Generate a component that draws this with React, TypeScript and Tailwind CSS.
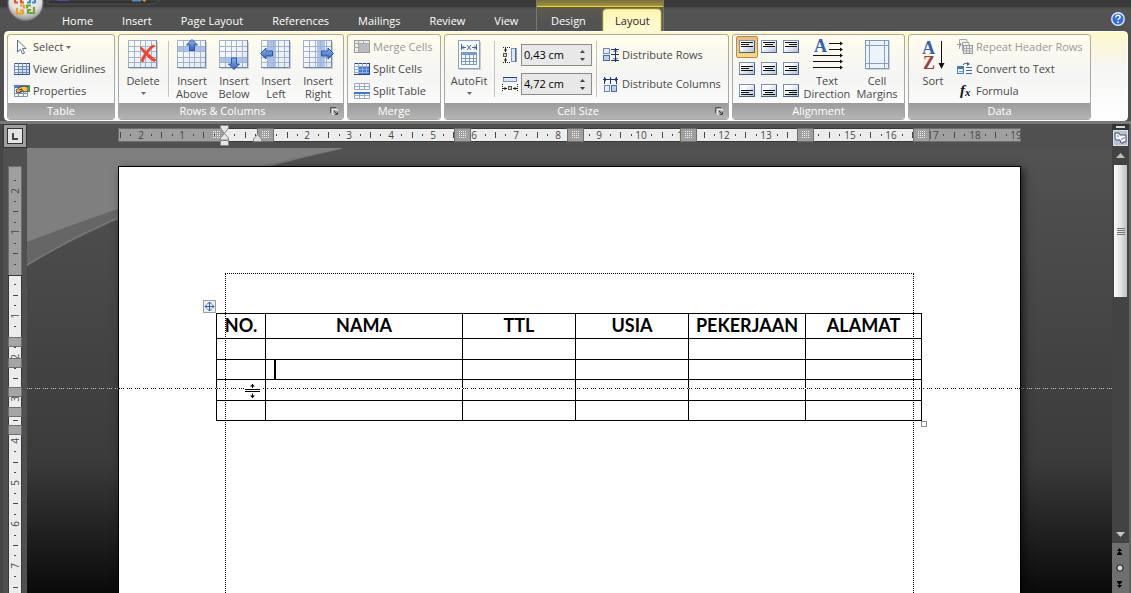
import React from 'react';

type Box = { children?: React.ReactNode; className?: string };

/* ---------- large icons ---------- */

function Grid32({ band, children }: { band?: React.ReactNode; children?: React.ReactNode }) {
  return (
    <svg width="32" height="32" viewBox="0 0 32 32" aria-hidden="true">
      <defs>
        <linearGradient id="cell" x1="0" y1="0" x2="1" y2="1">
          <stop offset="0" stopColor="#ffffff" />
          <stop offset="1" stopColor="#dfe8f2" />
        </linearGradient>
        <linearGradient id="arrow" x1="0" y1="0" x2="0" y2="1">
          <stop offset="0" stopColor="#8fb4f0" />
          <stop offset="1" stopColor="#2f63c0" />
        </linearGradient>
      </defs>
      <rect x="3" y="3" width="28" height="27" fill="#c9cdd3" />
      <rect x="2" y="2" width="28" height="27" fill="url(#cell)" />
      {band}
      <path d="M7.5 2V29M13.5 2V29M18.5 2V29M24.5 2V29M2 7.5H30M2 12.5H30M2 18.5H30M2 23.5H30" stroke="#a3b3c8" fill="none" />
      <path d="M1.500 28.500V1.500H30" stroke="#9db1cb" fill="none" />
      <path d="M1 28.500H29.500V1" stroke="#6f87a8" fill="none" />
      {children}
    </svg>
  );
}

const DeleteIcon = () => (
  <Grid32>
    <path d="M14 8c4 3 9 9 15 13l-2 1.500C21 19 16 13 13 9z" fill="#f2452d" stroke="#f2452d" strokeWidth="1" />
    <path d="M28 7C22 11 18 17 16 23l-2-1C16 16 20 10 26 6z" fill="#e93a22" stroke="#f2593f" strokeWidth="1" />
  </Grid32>
);
const AboveIcon = () => (
  <Grid32 band={<rect x="2" y="7" width="28" height="6" fill="#a8c2f2" />}>
    <path d="M16 .5l5.500 5.500H18.500V11.500h-5V6H10.500z" fill="url(#arrow)" stroke="#2a54a4" />
  </Grid32>
);
const BelowIcon = () => (
  <Grid32 band={<rect x="2" y="18" width="28" height="6" fill="#a8c2f2" />}>
    <path d="M16 30.500l-5.500-5.500h3v-6h5v6h3z" fill="url(#arrow)" stroke="#2a54a4" />
  </Grid32>
);
const LeftIcon = () => (
  <Grid32 band={<rect x="8" y="2" width="8" height="27" fill="#a8c2f2" />}>
    <path d="M.5 14.500l5.500-5.500v3h6.500v5H6v3z" fill="url(#arrow)" stroke="#2a54a4" />
  </Grid32>
);
const RightIcon = () => (
  <Grid32 band={<rect x="15" y="2" width="8" height="27" fill="#a8c2f2" />}>
    <path d="M31.500 14.500l-5.500-5.500v3h-6.500v5H26v3z" fill="url(#arrow)" stroke="#2a54a4" />
  </Grid32>
);
const AutoFitIcon = () => (
  <svg width="32" height="32" viewBox="0 0 32 32" aria-hidden="true">
    <rect x="6" y="3" width="22" height="28" fill="#c8ccd2" />
    <rect x="5.500" y="1.500" width="21" height="28" fill="#f7fafd" stroke="#8ba3c0" />
    <path d="M8.500 5V11M23.500 5V11M9 8.500h4M19 8.500h4M14 6l4 5M18 6l-4 5" stroke="#4a6796" fill="none" />
    <path d="M11 6.500l-2 2 2 2M21 6.500l2 2-2 2" stroke="#4a6796" fill="none" />
    <rect x="8" y="13" width="16" height="3" fill="#6f9ce0" />
    <path d="M8.500 13.500H23.500V25.500H8.500zM12.500 16V25M16.500 16V25M20.500 16V25M8 19.500H24M8 22.500H24" stroke="#7f97bb" fill="none" />
  </svg>
);
const TextDirectionIcon = () => (
  <svg width="32" height="32" viewBox="0 0 32 32" aria-hidden="true" className="overflow-visible">
    <text x="3" y="13" fontFamily="Liberation Serif, serif" fontWeight="700" fontSize="18" fill="#2f62b0">A</text>
    <path d="M18 4.500H31M18 10.500H31M2 16.500H31M2 22.500H31M2 28.500H31" stroke="#111" fill="none" />
    <path d="M29 2.500l3 2-3 2zM29 8.500l3 2-3 2zM29 14.500l3 2-3 2zM29 20.500l3 2-3 2zM29 26.500l3 2-3 2z" fill="#111" />
  </svg>
);
const CellMarginsIcon = () => (
  <svg width="32" height="32" viewBox="0 0 32 32" aria-hidden="true">
    <rect x="5" y="2" width="24" height="29" fill="#cfd3d8" />
    <rect x="4.500" y="1.500" width="23" height="28" fill="#edf3fb" stroke="#8199b8" />
    <path d="M8.500 2V29M23.500 2V29M5 6.500H27M5 24.500H27" stroke="#86a0c4" fill="none" />
  </svg>
);
const SortIcon = () => (
  <svg width="32" height="32" viewBox="0 0 32 32" aria-hidden="true" className="overflow-visible">
    <text x="5" y="15" fontFamily="Liberation Serif, serif" fontWeight="700" fontSize="18" fill="#3561ae">A</text>
    <text x="6" y="30" fontFamily="Liberation Serif, serif" fontWeight="700" fontSize="18" fill="#a23c3c">Z</text>
    <path d="M24.500 2V26" stroke="#111" fill="none" />
    <path d="M21.500 24h6l-3 6z" fill="#111" />
  </svg>
);

/* ---------- small icons ---------- */

const Svg16 = ({ children }: Box) => (
  <svg width="16" height="16" viewBox="0 0 16 16" aria-hidden="true" className="shrink-0 overflow-visible">{children}</svg>
);
const PointerIcon = () => (
  <Svg16>
    <path d="M3.500 1v12l3-2.800L8.500 15l2-1-2-4.500H12z" fill="#fff" stroke="#5c6f90" />
  </Svg16>
);
const SmallGrid = ({ fill, line, head }: { fill: string; line: string; head: string }) => (
  <Svg16>
    <rect x="0" y="2" width="16" height="12" fill="#f4f8fd" />
    <rect x="4" y="5" width="12" height="9" fill={fill} />
    <path d="M0 2.500H16" stroke={head} />
    <path d="M.5 2V14M4.500 2V14M8.500 2V14M12.500 2V14M0 5.500H16M0 8.500H16M0 11.500H16" stroke={line} fill="none" />
    <path d="M0 13.500H15.500V2" stroke={head} fill="none" />
  </Svg16>
);
const GridlinesIcon = () => <SmallGrid fill="#cfe0f8" line="#6f8fc0" head="#39578c" />;
const SplitCellsIcon = () => <SmallGrid fill="#4079dc" line="#8fafe0" head="#27457c" />;
const MergeIcon = () => (
  <Svg16>
    <rect x=".5" y="1.500" width="15" height="12" fill="#ececec" stroke="#9a9a9a" />
    <path d="M4.500 1V13M9.500 1V4M0 4.500H16M0 8.500H4" stroke="#a8a8a8" fill="none" />
    <rect x="5" y="5" width="10" height="8" fill="#b9bcc0" />
  </Svg16>
);
const SplitTableIcon = () => (
  <Svg16>
    <path d="M.5 .5H15.500V6.500H.5zM5.500 1V6M10.500 1V6M0 3.500H16" fill="#fff" stroke="#94a8c4" />
    <path d="M.5 9.500H15.500V15.500H.5zM5.500 9V15M10.500 9V15M0 12.500H16" fill="#fff" stroke="#94a8c4" />
    <path d="M0 10H16" stroke="#3b78dc" strokeWidth="2" />
  </Svg16>
);
const PropertiesIcon = () => (
  <Svg16>
    <path d="M.5 2.500H13.500V13.500H.5zM4.500 5V13M9.500 5V13M0 10.500H14" fill="#f4f8fd" stroke="#7d97c2" />
    <rect x="0" y="2" width="14" height="3" fill="#4b80d8" />
    <path d="M2 7l4-3 4-1 4 1v4l-3 1-2-1-3 2-1-1-2 1z" fill="#f3c04a" stroke="#3c3420" strokeWidth=".8" />
    <path d="M5 7l3-1M6 9l3-2" stroke="#3c3420" fill="none" />
    <rect x="14" y="2" width="2" height="7" fill="#3f9a55" />
  </Svg16>
);
const RowHeightIcon = () => (
  <Svg16>
    <path d="M1 .5H8M1 15.500H8" stroke="#222" strokeDasharray="1 1" fill="none" />
    <path d="M3.500 1v4M3.500 11v4M2 3h3M2 13h3" stroke="#222" fill="none" />
    <rect x="1.500" y="6.500" width="3" height="3" fill="#ddd" stroke="#555" />
    <rect x="9.500" y="1.500" width="4" height="13" fill="#dce8f8" stroke="#7b92b4" />
    <path d="M14 1V15" stroke="#27457c" />
  </Svg16>
);
const ColWidthIcon = () => (
  <Svg16>
    <rect x="1.500" y="1.500" width="13" height="4" fill="#dce8f8" stroke="#7b92b4" />
    <path d="M1 1.500H15" stroke="#27457c" />
    <path d="M.5 8V15M15.500 8V15" stroke="#222" strokeDasharray="1 1" fill="none" />
    <path d="M1 12.500h4M11 12.500h4M3 11v3M13 11v3" stroke="#222" fill="none" />
    <rect x="6.500" y="10.500" width="3" height="3" fill="#ddd" stroke="#555" />
  </Svg16>
);
const DistRowsIcon = () => (
  <Svg16>
    <rect x=".5" y="1.500" width="6" height="5" fill="#e4edf9" stroke="#6d88b3" />
    <rect x=".5" y="8.500" width="6" height="5" fill="#b9d0f0" stroke="#4a6aa0" />
    <path d="M8 2.500H16M8 7.500H16M8 13.500H16M12.500 1V15" stroke="#1f3a70" fill="none" />
    <path d="M10.500 5l2-2 2 2M10.500 11l2 2 2-2" stroke="#1f3a70" fill="none" />
  </Svg16>
);
const DistColsIcon = () => (
  <Svg16>
    <rect x="1.500" y="9.500" width="5" height="6" fill="#e4edf9" stroke="#6d88b3" />
    <rect x="8.500" y="9.500" width="5" height="6" fill="#b9d0f0" stroke="#4a6aa0" />
    <path d="M1.500 1V8M7.500 1V8M13.500 1V8M0 3.500H15" stroke="#1f3a70" fill="none" />
    <path d="M3 2l-2 1.500L3 5M12 2l2 1.500L12 5" stroke="#1f3a70" fill="none" />
  </Svg16>
);
const RepeatIcon = () => (
  <Svg16>
    <path d="M2.500 10V.5H9.500L10 3" fill="#f2f2f2" stroke="#a6a6a6" />
    <path d="M5.500 12V3.500H12V6" fill="#f2f2f2" stroke="#a6a6a6" />
    <rect x="6.500" y="6.500" width="9" height="8" fill="#ececec" stroke="#9a9a9a" />
    <path d="M6 9.500H16M6 12H16M9.500 7V14M12.500 7V14" stroke="#a6a6a6" fill="none" />
    <path d="M0 5.500h4M2.500 3.500l2 2-2 2" stroke="#999" fill="none" />
  </Svg16>
);
const ConvertIcon = () => (
  <Svg16>
    <rect x=".5" y="5.500" width="6" height="7" fill="#e9f1fc" stroke="#4f7ac4" />
    <rect x="1" y="6" width="6" height="2" fill="#3d74d4" />
    <path d="M2 10.500h4" stroke="#7d9fd6" />
    <path d="M9 6.500h6M9 9.500h6M9 12.500h6" stroke="#3d66ae" fill="none" />
    <path d="M6 4c1-2 3-2 5-1" stroke="#39578c" fill="none" />
    <path d="M10 1l3 2-3 2z" fill="#39578c" />
  </Svg16>
);
const FormulaIcon = () => (
  <Svg16>
    <text x="3" y="12" fontFamily="Liberation Serif, serif" fontStyle="italic" fontWeight="700" fontSize="15" fill="#111">f</text>
    <text x="8" y="13" fontFamily="Liberation Serif, serif" fontStyle="italic" fontWeight="700" fontSize="11" fill="#111">x</text>
  </Svg16>
);

function AlignIcon({ h, v }: { h: number; v: number }) {
  const widths = [12, 8, 12];
  const top = [2, 4, 6][v];
  return (
    <svg width="16" height="14" viewBox="0 0 16 14" aria-hidden="true">
      <defs>
        <linearGradient id="sheet" x1="0" y1="0" x2="1" y2="1">
          <stop offset="0.3" stopColor="#ffffff" />
          <stop offset="1" stopColor="#a9bdd8" />
        </linearGradient>
      </defs>
      <rect x=".5" y=".5" width="15" height="12" fill="url(#sheet)" stroke="#7a93b5" />
      <path d="M0 12.500H15.500V1" fill="none" stroke="#44618d" />
      {widths.map((w, i) => (
        <rect key={i} x={h === 0 ? 2 : h === 1 ? 8 - w / 2 : 14 - w} y={top + i * 2} width={w} height="1" fill="#111" />
      ))}
    </svg>
  );
}

const Caret = () => (
  <svg width="5" height="3" viewBox="0 0 5 3" aria-hidden="true"><path d="M0 0H5L2.500 3z" fill="#6a6a6a" /></svg>
);

/* ---------- ribbon building blocks ---------- */

function Group({ title, width, launcher, children }: { title: string; width: string; launcher?: boolean; children: React.ReactNode }) {
  return (
    <section className={`${width} flex shrink-0 flex-col overflow-hidden rounded-[3px] border border-[#a9a9a6] bg-gradient-to-b from-[#fffdec] via-[#f5f5f4] to-white`}>
      <div className="flex h-[68px] pt-px">{children}</div>
      <div className="flex h-4 items-center bg-gradient-to-b from-[#9b9b9b] to-[#b4b4b4] leading-4 text-white">
        <h2 className="flex-1 text-center">{title}</h2>
        {launcher && (
          <button aria-label={`${title} options`} className="w-[17px] pl-1">
            <svg className="block" width="9" height="9" viewBox="0 0 9 9" aria-hidden="true">
              <path d="M.5 6V.5H6" stroke="#555" fill="none" />
              <path d="M2.500 7.500V2.500H7.500V7.500z" stroke="#eee" fill="none" />
              <path d="M4 4l3 3M7.500 4.500v3h-3" stroke="#444" fill="none" />
            </svg>
          </button>
        )}
      </div>
    </section>
  );
}

function Small({ icon, label, disabled, caret }: { icon: React.ReactNode; label: string; disabled?: boolean; caret?: boolean }) {
  return (
    <button disabled={disabled} className="flex h-[22px] items-center gap-[3px] whitespace-nowrap text-[#484848] disabled:text-[#989898]">
      {icon}
      <span>{label}</span>
      {caret && <Caret />}
    </button>
  );
}

function Large({ icon, lines, caret, width }: { icon: React.ReactNode; lines: string[]; caret?: boolean; width: string }) {
  return (
    <button className={`${width} flex shrink-0 flex-col items-center pt-[3px] text-[#484848]`}>
      {icon}
      <span className="flex flex-col items-center whitespace-nowrap pt-[3px] leading-[13px]">
        {lines.map((l) => <span key={l}>{l}</span>)}
        {caret && <span className="flex h-3 items-center"><Caret /></span>}
      </span>
    </button>
  );
}

const Separator = () => <div className="mx-px mt-[5px] h-[56px] w-px shrink-0 bg-[#c4c4c2]" />;

function Spinner({ icon, label, value }: { icon: React.ReactNode; label: string; value: string }) {
  return (
    <label className="flex h-[22px] items-center gap-[3px]">
      {icon}
      <span className="flex h-[22px] w-[71px] items-center border border-[#8b8b8b] bg-[#e8e8e8]">
        <input aria-label={label} defaultValue={value} className="w-0 flex-1 bg-transparent pl-[2px] text-[11px] text-black outline-none" />
        <span className="flex w-[17px] flex-col items-center gap-[5px]">
          <button aria-label={`Increase ${label}`}>
            <svg className="block" width="5" height="3" viewBox="0 0 5 3"><path d="M2.500 0L5 3H0z" fill="#444" /></svg>
          </button>
          <button aria-label={`Decrease ${label}`}>
            <svg className="block" width="5" height="3" viewBox="0 0 5 3"><path d="M0 0H5L2.500 3z" fill="#444" /></svg>
          </button>
        </span>
      </span>
    </label>
  );
}

/* ---------- rulers ---------- */

const CM = 41.7;

function HorizontalRuler() {
  const zero = 106;
  const quarters = Array.from({ length: 88 }, (_, i) => i - 10);
  const grips = [139, 336, 449, 562, 679, 795];
  return (
    <svg width="903" height="22" viewBox="0 0 903 22" role="img" aria-label="Horizontal ruler" className="block">
      <rect x="0" y="4" width="903" height="14" fill="#6e6e6e" />
      <rect x="1" y="5" width="901" height="12" fill="#9f9f9f" />
      <rect x="106" y="4" width="690" height="14" fill="#383838" />
      <rect x="107" y="5" width="688" height="12" fill="#ececec" />
      {quarters.map((q) => {
        const x = Math.round(zero + (q * CM) / 4);
        if (q === 0 || x > 900) return null;
        if (q % 4 === 0)
          return <text key={q} x={x} y="15" textAnchor="middle" fontSize="10" fontFamily="Open Sans, sans-serif" fill="#484848">{Math.abs(q / 4)}</text>;
        return q % 2 === 0
          ? <rect key={q} x={x} y="8" width="1" height="6" fill="#484848" />
          : <rect key={q} x={x} y="10" width="1" height="2" fill="#484848" />;
      })}
      {grips.map((x) => (
        <g key={x}>
          <rect x={x} y="4" width="17" height="14" fill="#6e6e6e" />
          <rect x={x + 1} y="5" width="15" height="12" fill="#9f9f9f" />
          {[0, 1, 2, 3].map((r) => [0, 1, 2, 3].map((c) => (
            <rect key={`${r}${c}`} x={x + 5 + c * 2} y={7 + r * 2} width="1" height="1" fill="#f4f4f4" />
          )))}
        </g>
      ))}
      <path d="M102.500 1.500H110.500V4L106.500 9.500L102.500 4z" fill="#e6e6e6" stroke="#888" />
      <path d="M106.500 9.500L110.500 14V16H102.500V14z" fill="#e6e6e6" stroke="#888" />
      <rect x="102.500" y="16.500" width="8" height="5" fill="#e6e6e6" stroke="#888" />
      <path d="M139.500 10.500L143.500 15V17.500H135.500V15z" fill="#e0e0e0" stroke="#888" />
      <path d="M95 7.500h7M95 9.500h7M95 11.500h7M95 13.500h7" stroke="#f4f4f4" strokeDasharray="1 1" />
    </svg>
  );
}

function VerticalRuler() {
  const zero = 108;
  const quarters = Array.from({ length: 40 }, (_, i) => i - 9);
  const grips = [171, 192, 221, 241, 259];
  return (
    <svg width="14" height="100%" role="img" aria-label="Vertical ruler" className="block">
      <rect width="14" height="100%" fill="#6e6e6e" />
      <rect x="1" y="1" width="12" height="109" fill="#9f9f9f" />
      <rect y="109" width="14" height="100%" fill="#383838" />
      <rect x="1" y="110" width="12" height="100%" fill="#ececec" />
      {quarters.map((q) => {
        const y = Math.round(zero + (q * CM) / 4);
        if (q === 0) return null;
        if (q % 4 === 0)
          return <text key={q} transform={`translate(11 ${y}) rotate(-90)`} textAnchor="middle" fontSize="10" fontFamily="Open Sans, sans-serif" fill="#484848">{Math.abs(q / 4)}</text>;
        return q % 2 === 0
          ? <rect key={q} x="5" y={y} width="5" height="1" fill="#484848" />
          : <rect key={q} x="6" y={y} width="2" height="1" fill="#484848" />;
      })}
      {grips.map((y) => (
        <g key={y}>
          <rect y={y} width="14" height="10" fill="#6e6e6e" />
          <rect x="1" y={y + 1} width="12" height="8" fill="#a5a5a5" />
        </g>
      ))}
    </svg>
  );
}

/* ---------- document ---------- */

const headings = ['NO.', 'NAMA', 'TTL', 'USIA', 'PEKERJAAN', 'ALAMAT'];
const rowHeights = ['h-[21px]', 'h-[20px]', 'h-[21px]', 'h-[20px]'];

function DocumentTable() {
  return (
    <div className="relative -ml-[10px] -mr-[9px]">
      <table className="w-full table-fixed border-collapse font-['Lato',sans-serif] text-black">
        <colgroup>
          <col className="w-[49px]" />
          <col className="w-[197px]" />
          <col className="w-[113px]" />
          <col className="w-[113px]" />
          <col className="w-[117px]" />
          <col className="w-[116px]" />
        </colgroup>
        <thead>
          <tr className="h-[25px]">
            {headings.map((h) => (
              <th key={h} className="border border-black p-0 pb-[2px] text-center text-[18px] font-bold leading-[22px]">{h}</th>
            ))}
          </tr>
        </thead>
        <tbody>
          {rowHeights.map((height, r) => (
            <tr key={r} className={height}>
              {headings.map((h, c) => (
                <td key={h} className="border border-black p-0">
                  {r === 1 && c === 1 && <div className="ml-2 h-[19px] w-[2px] bg-black" />}
                </td>
              ))}
            </tr>
          ))}
        </tbody>
      </table>
      <button aria-label="Move table" className="absolute -left-[13px] -top-[13px]">
        <svg className="block" width="13" height="13" viewBox="0 0 13 13">
          <rect x=".5" y=".5" width="12" height="12" fill="#ececec" stroke="#a0a0a0" />
          <path d="M6.500 2v9M2 6.500h9" stroke="#2f5fc4" />
          <path d="M4.500 4L6.500 2l2 2M4.500 9l2 2 2-2M4 4.500L2 6.500l2 2M9 4.500l2 2-2 2" stroke="#2f5fc4" fill="none" />
        </svg>
      </button>
      <div className="absolute -bottom-[6px] -right-[5px] h-[6px] w-[6px] border border-[#8a8a8a] bg-white" />
      <svg className="absolute left-[29px] top-[70px] z-10" width="16" height="16" viewBox="0 0 16 16" aria-hidden="true">
        <rect x="0" y="5" width="16" height="5" fill="#fff" />
        <path d="M0 6.500H15M0 8.500H15M7.500 1V5M7.500 10.500V15" stroke="#000" />
        <path d="M5 3.500L7.500 1 10 3.500zM5 12.500L7.500 15 10 12.500z" fill="#000" />
      </svg>
    </div>
  );
}

function ScrollColumn() {
  return (
    <div className="flex w-[19px] shrink-0 flex-col items-center border-r-2 border-[#5f5f5f] bg-[#434343]">
      <div className="flex h-[6px] w-full items-center justify-center bg-[#333]"><div className="h-[2px] w-[9px] bg-[#d8d8d8]" /></div>
      <button aria-label="View ruler" className="flex h-4 w-[15px] items-center justify-center border border-[#d8deea] bg-[#b9c2d4]">
        <svg width="13" height="12" viewBox="0 0 13 12" aria-hidden="true">
          <path d="M1 1h4l1 2h6v7H9v1H7l-1-3H2L1 6z" fill="#f4f6fb" stroke="#3e4f74" />
          <path d="M4 3v2M8 6v2M10 5v2" stroke="#7c6f9c" />
        </svg>
      </button>
      <button aria-label="Scroll up" className="flex h-[19px] items-center">
        <svg width="9" height="5" viewBox="0 0 9 5"><path d="M4.500 0L9 5H0z" fill="#bdbdbd" /></svg>
      </button>
      <div className="flex h-[132px] w-[13px] flex-col items-center justify-center gap-px bg-gradient-to-r from-[#fafafa] via-[#e4e4e6] to-[#bfbfc2]">
        {[0, 1, 2, 3].map((i) => <div key={i} className="h-px w-2 bg-[#777]" />)}
      </div>
      <div className="flex-1" />
      <button aria-label="Scroll down" className="flex h-[18px] items-center">
        <svg width="9" height="5" viewBox="0 0 9 5"><path d="M0 0H9L4.500 5z" fill="#c8c8c8" /></svg>
      </button>
      <div className="flex h-[50px] w-full flex-col items-center justify-around bg-[#6f6f6f] pr-[2px]">
        <button aria-label="Previous page">
          <svg className="block" width="7" height="7" viewBox="0 0 7 7"><path d="M3.500 0L6 3H1zM3.500 3L6 6H1zM1 6h5v1H1z" fill="#000" /></svg>
        </button>
        <button aria-label="Select browse object">
          <svg className="block" width="8" height="8" viewBox="0 0 8 8"><circle cx="4" cy="4" r="3.200" fill="#d4d4d4" stroke="#111" /></svg>
        </button>
        <button aria-label="Next page">
          <svg className="block" width="7" height="7" viewBox="0 0 7 7"><path d="M3.500 7L6 4H1zM3.500 4L6 1H1zM1 0h5v1H1z" fill="#000" /></svg>
        </button>
      </div>
    </div>
  );
}

const tabs = ['Home', 'Insert', 'Page Layout', 'References', 'Mailings', 'Review', 'View'];

export default function App() {
  return (
    <div className="flex h-screen flex-col overflow-hidden bg-[#505050] font-['Open_Sans','Noto_Sans',sans-serif] text-[11px]">
      {/* title strip and tabs */}
      <header className="relative flex h-[31px] shrink-0 bg-[linear-gradient(#3b3b3b_0,#3b3b3b_7px,#4a4a4a_7px,#4a4a4a_8px,#535353_9px)] pl-[48px]">
        <svg className="absolute left-0 top-0" width="170" height="24" viewBox="0 0 170 24" aria-hidden="true">
          <defs>
            <radialGradient id="orb" cx=".5" cy=".3" r=".7">
              <stop offset="0" stopColor="#ffffff" />
              <stop offset=".7" stopColor="#dcdcdc" />
              <stop offset="1" stopColor="#8c8c8c" />
            </radialGradient>
          </defs>
          <path d="M48 0V4H150Q156 4 160 0z" fill="#333" stroke="#5c5c5c" strokeWidth=".6" />
          <path d="M57 0h12v1H57z" fill="#5146b8" />
          <path d="M132 0h9v1.500h-9z" fill="#4b8bc8" />
          <path d="M142 0h4l-1 2-2-1z" fill="#e88a2c" />
          <circle cx="25.500" cy="3" r="17.500" fill="url(#orb)" stroke="#777" />
          <g fill="none" strokeWidth="2.200" strokeLinejoin="round">
            <path d="M24 2.500h-3V0M18 2.500h-3V0" stroke="#e2552a" />
            <path d="M27 2.500h3V0M32 2.500h3V0" stroke="#3f8ad0" />
            <path d="M20 5.500h4v3M17 8v5.500h6V10.500h-3" stroke="#f3a01c" />
            <path d="M31 5.500h-4v3M34 7v6h-6v-3h3" stroke="#6aa636" />
          </g>
        </svg>
        <nav className="flex items-end gap-px text-white" aria-label="Ribbon tabs">
          {tabs.map((t) => (
            <button key={t} className="h-[22px] whitespace-nowrap px-[14px] leading-[21px]">{t}</button>
          ))}
        </nav>
        <div className="ml-1 flex h-[31px] w-[128px] items-end border-x border-[#77796f] bg-[linear-gradient(#746d45_0,#a8952e_6px,#f0d828_6px,#f0d828_7px,#5c5b52_7px,#535353_22px)]">
          <button className="h-[22px] w-[62px] leading-[21px] text-white">Design</button>
          <button className="ml-1 h-[22px] w-[58px] rounded-t-[4px] border border-b-0 border-[#f5e681] bg-gradient-to-b from-[#fff6b0] to-[#fffbd6] leading-[21px] text-[#2b1a30] shadow-[0_0_2px_#ffe95a]">Layout</button>
        </div>
        <button aria-label="Help" className="ml-auto mr-[6px] mt-3 h-[14px]">
          <svg className="block" width="14" height="14" viewBox="0 0 13 13">
            <circle cx="6.500" cy="6.500" r="5.800" fill="#2f6fe0" stroke="#dbe8ff" strokeWidth="1.300" />
            <path d="M4.500 5q0-2 2-2t2 1.700q0 1-1 1.500t-1 1.300M6.500 8.700v1.400" stroke="#fff" strokeWidth="1.400" fill="none" />
          </svg>
        </button>
      </header>

      {/* ribbon */}
      <div className="ml-1 mr-[3px] flex h-[90px] shrink-0 items-start gap-[3px] rounded-[4px] border border-[#fdfdfa] bg-gradient-to-b from-[#fff8c8] via-[#f6f6f5] via-40% to-white pl-[2px] pt-[2px]">
        <Group title="Table" width="w-[108px]">
          <div className="flex flex-col pl-[6px]">
            <Small icon={<PointerIcon />} label="Select" caret />
            <Small icon={<GridlinesIcon />} label="View Gridlines" />
            <Small icon={<PropertiesIcon />} label="Properties" />
          </div>
        </Group>
        <Group title="Rows & Columns" width="w-[226px]" launcher>
          <Large icon={<DeleteIcon />} lines={['Delete']} caret width="w-[48px]" />
          <Separator />
          <div className="flex pl-px">
            <Large icon={<AboveIcon />} lines={['Insert', 'Above']} width="w-[42px]" />
            <Large icon={<BelowIcon />} lines={['Insert', 'Below']} width="w-[42px]" />
            <Large icon={<LeftIcon />} lines={['Insert', 'Left']} width="w-[42px]" />
            <Large icon={<RightIcon />} lines={['Insert', 'Right']} width="w-[42px]" />
          </div>
        </Group>
        <Group title="Merge" width="w-[94px]">
          <div className="flex flex-col pl-[6px]">
            <Small icon={<MergeIcon />} label="Merge Cells" disabled />
            <Small icon={<SplitCellsIcon />} label="Split Cells" />
            <Small icon={<SplitTableIcon />} label="Split Table" />
          </div>
        </Group>
        <Group title="Cell Size" width="w-[285px]" launcher>
          <Large icon={<AutoFitIcon />} lines={['AutoFit']} caret width="w-[48px]" />
          <Separator />
          <div className="flex flex-col gap-[7px] pl-[6px] pr-[3px] pt-[8px]">
            <Spinner icon={<RowHeightIcon />} label="Table row height" value="0,43 cm" />
            <Spinner icon={<ColWidthIcon />} label="Table column width" value="4,72 cm" />
          </div>
          <Separator />
          <div className="flex flex-col gap-[7px] pl-[5px] pt-[8px]">
            <Small icon={<DistRowsIcon />} label="Distribute Rows" />
            <Small icon={<DistColsIcon />} label="Distribute Columns" />
          </div>
        </Group>
        <Group title="Alignment" width="w-[173px]">
          <div className="grid h-[66px] grid-cols-[22px_22px_22px] grid-rows-3 pl-[3px]">
            {['Top', 'Center', 'Bottom'].map((v, vi) =>
              ['Left', 'Center', 'Right'].map((h, hi) => (
                <button
                  key={v + h}
                  aria-label={`Align ${v} ${h}`}
                  className={
                    vi === 0 && hi === 0
                      ? 'flex items-center justify-center rounded-[2px] border border-[#b98a4e] bg-gradient-to-b from-[#f3b878] to-[#ffd873]'
                      : 'flex items-center justify-center'
                  }
                >
                  <AlignIcon h={hi} v={vi} />
                </button>
              ))
            )}
          </div>
          <Large icon={<TextDirectionIcon />} lines={['Text', 'Direction']} width="w-[50px]" />
          <Large icon={<CellMarginsIcon />} lines={['Cell', 'Margins']} width="w-[50px]" />
        </Group>
        <Group title="Data" width="w-[183px]">
          <Large icon={<SortIcon />} lines={['Sort']} width="w-[48px]" />
          <div className="flex flex-col">
            <Small icon={<RepeatIcon />} label="Repeat Header Rows" disabled />
            <Small icon={<ConvertIcon />} label="Convert to Text" />
            <Small icon={<FormulaIcon />} label="Formula" />
          </div>
        </Group>
      </div>
      <div className="h-[3px] shrink-0 bg-[#777a77]" />

      {/* workspace */}
      <div className="flex min-h-0 flex-1 border-l-[3px] border-[#464646]">
        <div className="flex min-w-0 flex-1 flex-col">
          <div className="flex h-6 shrink-0">
            <button aria-label="Tab selector" className="flex h-6 w-6 items-center justify-center border border-[#333] bg-[#9f9f9f]">
              <svg width="16" height="16" viewBox="0 0 16 16" aria-hidden="true">
                <rect x=".5" y=".5" width="15" height="15" fill="#e4e4e4" stroke="#333" />
                <path d="M6 5V11H11" stroke="#444" strokeWidth="2" fill="none" />
              </svg>
            </button>
            <div className="flex min-w-0 flex-1 justify-center"><HorizontalRuler /></div>
          </div>
          <div className="flex min-h-0 flex-1">
            <div className="w-6 shrink-0 overflow-hidden pl-[5px] pt-[18px]"><VerticalRuler /></div>
            <main className="relative flex min-w-0 flex-1 flex-col overflow-hidden bg-[linear-gradient(#525252_0%,#3b3b3b_70%,#0a0a0a_100%)]">
              <svg className="absolute left-0 top-0" width="330" height="120" viewBox="0 0 330 120" aria-hidden="true">
                <path d="M0 0H315Q120 45 0 118z" fill="#666" />
                <path d="M315 0Q120 43 0 117" fill="none" stroke="#777" strokeWidth="1.500" />
                <path d="M0 0H315Q160 32 0 94z" fill="#7f7f7f" />
              </svg>
              <div className="absolute left-0 right-0 top-[240px] h-px bg-[repeating-linear-gradient(90deg,#c8c8c8_0_1px,transparent_1px_2px,#c8c8c8_2px_3px,transparent_3px_4px,#c8c8c8_4px_5px,transparent_5px_8px)]" />
              <article className="relative mx-auto mt-[18px] flex w-[903px] max-w-full flex-1 flex-col border border-b-0 border-black bg-white px-[106px] pt-[106px] shadow-[3px_3px_8px_rgba(0,0,0,0.6)]">
                <div className="flex-1 border border-b-0 border-dotted border-black pt-[39px]">
                  <DocumentTable />
                </div>
                <div className="absolute left-0 right-0 top-[221px] h-px bg-[repeating-linear-gradient(90deg,#000_0_1px,#fff_1px_2px,#000_2px_3px,#fff_3px_4px,#000_4px_5px,#fff_5px_8px)]" />
              </article>
            </main>
          </div>
        </div>
        <ScrollColumn />
      </div>
    </div>
  );
}
